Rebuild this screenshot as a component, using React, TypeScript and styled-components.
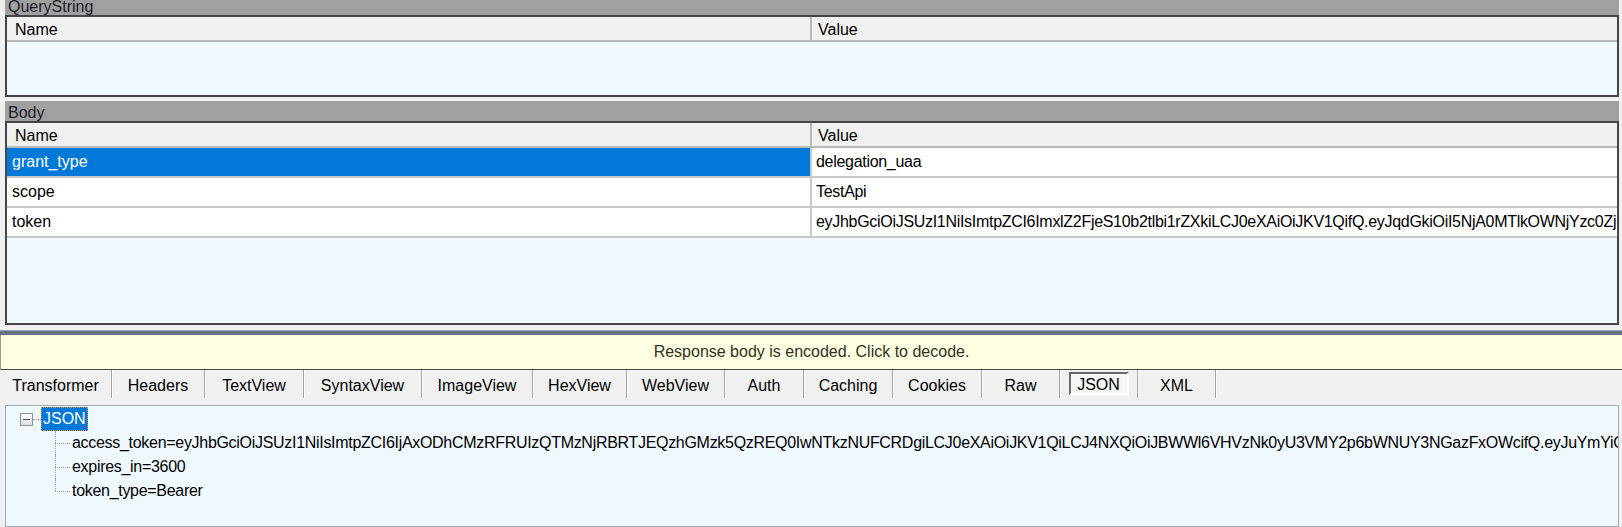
import React from 'react';
import styled, { createGlobalStyle } from 'styled-components';

const GlobalStyle = createGlobalStyle`
  html, body {
    margin: 0;
    padding: 0;
    background: #f0f0f0;
  }
  body {
    font-family: 'Liberation Sans', Arial, sans-serif;
    font-size: 16px;
    color: #000;
  }
`;

const Page = styled.div`
  width: 1622px;
  height: 527px;
  overflow: hidden;
  display: flex;
  flex-direction: column;
  background: #f0f0f0;
`;

const TopArea = styled.div`
  display: flex;
  flex-direction: column;
  padding: 0 3px 0 5px;
`;

const Group = styled.section<{ gap?: number }>`
  display: flex;
  flex-direction: column;
  margin-bottom: ${(p) => p.gap ?? 0}px;
`;

const Band = styled.div<{ height: number }>`
  height: ${(p) => p.height}px;
  background: #a0a0a0;
  display: flex;
  align-items: flex-end;
  overflow: hidden;
  padding-left: 3px;
`;

const BandTitle = styled.span`
  line-height: 16px;
  color: #1c1c2a;
  white-space: nowrap;
`;

const TableBox = styled.div<{ fill: number }>`
  border: 2px solid #454545;
  background: #f0f8ff;
  display: flex;
  flex-direction: column;
  padding-bottom: ${(p) => p.fill}px;
`;

const Row = styled.div<{ header?: boolean }>`
  display: grid;
  grid-template-columns: 805px 1fr;
  height: ${(p) => (p.header ? 23 : 28)}px;
  background: ${(p) => (p.header ? '#f0f0f0' : '#fff')};
  border-bottom: 2px solid ${(p) => (p.header ? '#b8b8b8' : '#c8c8c8')};
`;

const Cell = styled.div<{ header?: boolean; selected?: boolean; first?: boolean }>`
  overflow: hidden;
  white-space: nowrap;
  padding-left: ${(p) => (p.header ? (p.first ? 8 : 6) : p.first ? 5 : 4)}px;
  padding-top: ${(p) => (p.header ? 3 : 0)}px;
  line-height: ${(p) => (p.header ? 20 : 27)}px;
  letter-spacing: ${(p) => (p.header || p.first ? 0 : -0.3)}px;
  background: ${(p) => (p.selected ? '#0078d7' : 'transparent')};
  color: ${(p) => (p.selected ? '#fff' : '#000')};
  border-right: ${(p) => (p.first ? `2px solid ${p.header ? '#b8b8b8' : '#c8c8c8'}` : 'none')};
`;

const Splitter = styled.div`
  margin-top: 5px;
  height: 4px;
  background: #66737f;
  border-top: 1px solid #9aa6b2;
`;

const InfoBar = styled.div`
  height: 34px;
  background: #ffffe1;
  border-bottom: 1px solid #4a4a4a;
  border-left: 1px solid #9a9a9a;
  text-align: center;
  line-height: 33px;
  color: #333026;
  cursor: pointer;
`;

const TabStrip = styled.div`
  display: flex;
  height: 28px;
`;

const Tab = styled.div<{ width: number }>`
  width: ${(p) => p.width}px;
  box-sizing: border-box;
  height: 28px;
  border-right: 1px solid #a5a5a5;
  box-shadow: 1px 0 0 #fbfbfb;
  display: flex;
  justify-content: center;
  padding-top: 4px;
  line-height: 24px;
  white-space: nowrap;
`;

const ActiveFrame = styled.div`
  width: 60px;
  height: 23px;
  box-sizing: border-box;
  margin-top: -2px;
  border-style: solid;
  border-width: 2px;
  border-color: #6a6a6a #fdfdfd #fdfdfd #6a6a6a;
  background: #f7f7f7;
  text-align: center;
  line-height: 19px;
  padding-top: 1px;
`;

const TreePanel = styled.div`
  margin: 7px 3px 0 5px;
  flex: 1;
  border: 1px solid #a3abb3;
  background: #f0f8ff;
  padding-top: 1px;
  overflow: hidden;
`;

const TreeNode = styled.div`
  display: flex;
  align-items: center;
  height: 24px;
  padding-left: 14px;
`;

const Expander = styled.span`
  width: 13px;
  height: 13px;
  box-sizing: border-box;
  border: 1px solid #919191;
  background: linear-gradient(#ffffff, #dcdcdc);
  display: flex;
  align-items: center;
  justify-content: center;
  &::after {
    content: '';
    width: 7px;
    height: 1px;
    background: #3b5b8c;
  }
`;

const Stub = styled.span`
  width: 8px;
  border-top: 1px dotted #a0a0a0;
`;

const NodeLabel = styled.span<{ selected?: boolean }>`
  height: 24px;
  box-sizing: border-box;
  padding: 0 2px;
  line-height: 24px;
  color: ${(p) => (p.selected ? '#fff' : '#000')};
  background: ${(p) => (p.selected ? '#0078d7' : 'transparent')};
  outline: ${(p) => (p.selected ? '1px dotted #e08a2a' : 'none')};
  outline-offset: -1px;
`;

const Children = styled.div`
  margin-left: 49px;
  display: flex;
  flex-direction: column;
`;

const Leaf = styled.div`
  position: relative;
  height: 24px;
  line-height: 24px;
  padding-left: 17px;
  white-space: nowrap;
  letter-spacing: -0.3px;
  &::before {
    content: '';
    position: absolute;
    left: 0;
    top: 12px;
    width: 15px;
    border-top: 1px dotted #a0a0a0;
  }
  &::after {
    content: '';
    position: absolute;
    left: 0;
    top: 0;
    bottom: 0;
    border-left: 1px dotted #a0a0a0;
  }
  &:last-child::after {
    bottom: 12px;
  }
`;

const bodyRows = [
  { name: 'grant_type', value: 'delegation_uaa', selected: true },
  { name: 'scope', value: 'TestApi' },
  {
    name: 'token',
    value:
      'eyJhbGciOiJSUzI1NiIsImtpZCI6ImxlZ2FjeS10b2tlbi1rZXkiLCJ0eXAiOiJKV1QifQ.eyJqdGkiOiI5NjA0MTlkOWNjYzc0ZjE2YjY4ZTlmZDM0NDc2ZTk5NyIsInN1YiI6',
  },
];

const tabs = [
  { label: 'Transformer', width: 112 },
  { label: 'Headers', width: 93 },
  { label: 'TextView', width: 99 },
  { label: 'SyntaxView', width: 118 },
  { label: 'ImageView', width: 111 },
  { label: 'HexView', width: 94 },
  { label: 'WebView', width: 98 },
  { label: 'Auth', width: 79 },
  { label: 'Caching', width: 89 },
  { label: 'Cookies', width: 89 },
  { label: 'Raw', width: 78 },
  { label: 'JSON', width: 78, active: true },
  { label: 'XML', width: 78 },
];

const jsonItems = [
  'access_token=eyJhbGciOiJSUzI1NiIsImtpZCI6IjAxODhCMzRFRUIzQTMzNjRBRTJEQzhGMzk5QzREQ0IwNTkzNUFCRDgiLCJ0eXAiOiJKV1QiLCJ4NXQiOiJBWWl6VHVzNk0yU3VMY2p6bWNUY3NGazFxOWcifQ.eyJuYmYiOjE1NTk2MzQ1NzAsImV4cCI6',
  'expires_in=3600',
  'token_type=Bearer',
];

function HeaderRow() {
  return (
    <Row header>
      <Cell header first>
        Name
      </Cell>
      <Cell header>Value</Cell>
    </Row>
  );
}

export default function App() {
  return (
    <Page>
      <GlobalStyle />
      <TopArea>
        <Group gap={4}>
          <Band height={15}>
            <BandTitle>QueryString</BandTitle>
          </Band>
          <TableBox fill={53}>
            <HeaderRow />
          </TableBox>
        </Group>
        <Group>
          <Band height={20}>
            <BandTitle>Body</BandTitle>
          </Band>
          <TableBox fill={85}>
            <HeaderRow />
            {bodyRows.map((r) => (
              <Row key={r.name}>
                <Cell first selected={r.selected}>
                  {r.name}
                </Cell>
                <Cell>{r.value}</Cell>
              </Row>
            ))}
          </TableBox>
        </Group>
      </TopArea>
      <Splitter />
      <InfoBar>Response body is encoded. Click to decode.</InfoBar>
      <TabStrip>
        {tabs.map((t) => (
          <Tab key={t.label} width={t.width}>
            {t.active ? <ActiveFrame>{t.label}</ActiveFrame> : t.label}
          </Tab>
        ))}
      </TabStrip>
      <TreePanel>
        <TreeNode>
          <Expander />
          <Stub />
          <NodeLabel selected>JSON</NodeLabel>
        </TreeNode>
        <Children>
          {jsonItems.map((item) => (
            <Leaf key={item}>{item}</Leaf>
          ))}
        </Children>
      </TreePanel>
    </Page>
  );
}
